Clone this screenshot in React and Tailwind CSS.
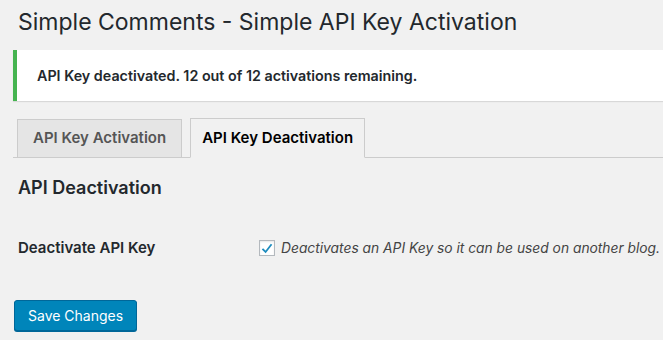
const App = () => {
  return (
    <div
      className="min-h-[340px] w-full overflow-hidden bg-[#f1f1f1] text-[#23282d]"
      style={{ fontFamily: 'Inter, "Liberation Sans", Arial, sans-serif' }}
    >
      <div className="pl-[13px]">
        <h1 className="pl-[5px] pt-[7px] text-[23px] font-normal leading-[30px]">
          Simple Comments - Simple API Key Activation
        </h1>

        <div className="mt-[13px] flex h-[51px] items-center border-l-4 border-[#46b450] bg-white pl-[20px] shadow-[0_1px_1px_rgba(0,0,0,0.1)]">
          <p className="text-[14.3px] font-semibold text-[#23282d]">
            API Key deactivated. 12 out of 12 activations remaining.
          </p>
        </div>

        <div className="mt-[17px] flex items-end gap-[8px] border-b border-[#cccccc] pl-[4px]">
          <div className="-mb-px flex h-[39px] items-center border border-[#cccccc] bg-[#e5e5e5] px-[15px] text-[15px] font-semibold text-[#555555]">
            API Key Activation
          </div>
          <div className="-mb-px flex h-[40px] items-center border border-b-[#f1f1f1] border-[#cccccc] bg-[#f1f1f1] px-[11px] text-[15px] font-semibold text-black">
            API Key Deactivation
          </div>
        </div>

        <h2 className="mt-[19px] pl-[5px] text-[18px] font-semibold leading-[22px]">API Deactivation</h2>

        <div className="mt-[38px] flex items-center pl-[5px]">
          <div className="w-[241px] text-[15px] font-semibold">Deactivate API Key</div>
          <div className="flex items-center gap-[6px]">
            <span className="flex h-[16px] w-[16px] items-center justify-center border border-[#b4b9be] bg-white shadow-[inset_0_1px_2px_rgba(0,0,0,0.1)]">
              <svg viewBox="0 0 20 20" className="h-[15px] w-[15px]">
                <path d="M3.5 10.5 L8 15 L16.5 4" fill="none" stroke="#1e8cbe" strokeWidth="2.6" />
              </svg>
            </span>
            <span className="whitespace-nowrap text-[13.8px] italic text-[#444444]">
              Deactivates an API Key so it can be used on another blog.
            </span>
          </div>
        </div>

        <button className="mt-[40px] ml-[1px] h-[31px] rounded-[3px] border border-[#006799] bg-[#0085ba] px-[13px] text-[14px] text-white shadow-[0_1px_0_#006799]">
          Save Changes
        </button>
      </div>
    </div>
  );
};

export default App;
